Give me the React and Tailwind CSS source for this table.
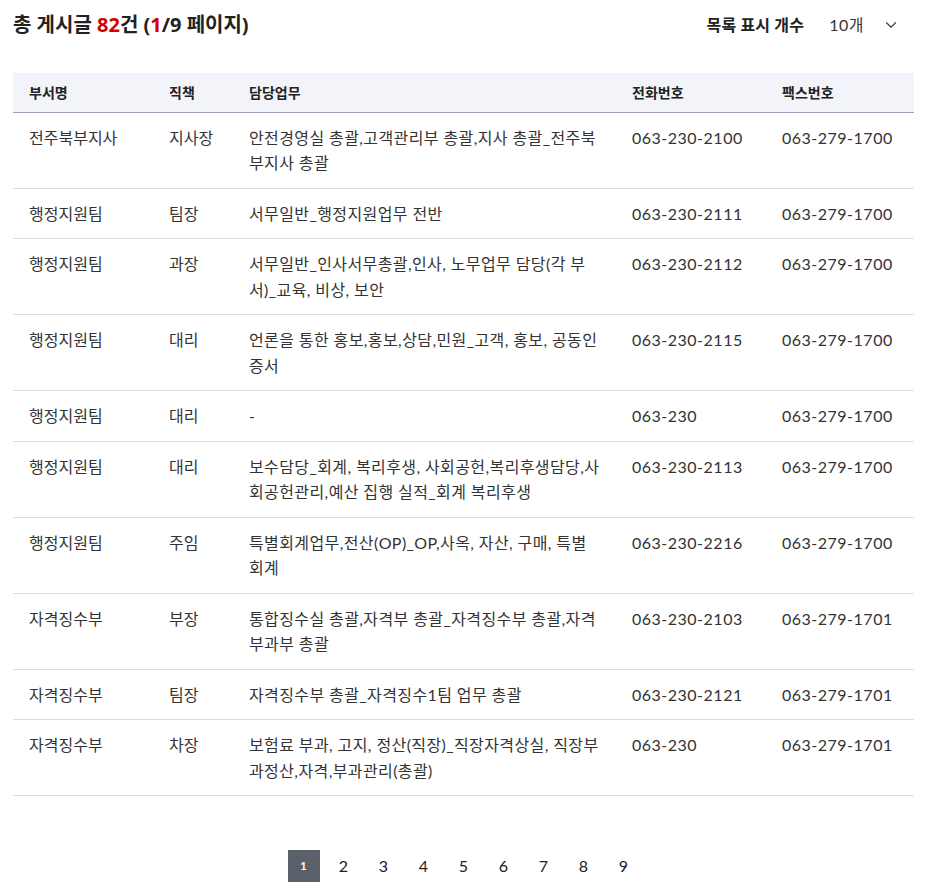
import React from "react";
import { ChevronDown } from "lucide-react";

const rows = [
  ["전주북부지사", "지사장", "안전경영실 총괄,고객관리부 총괄,지사 총괄_전주북부지사 총괄", "063-230-2100", "063-279-1700"],
  ["행정지원팀", "팀장", "서무일반_행정지원업무 전반", "063-230-2111", "063-279-1700"],
  ["행정지원팀", "과장", "서무일반_인사서무총괄,인사, 노무업무 담당(각 부서)_교육, 비상, 보안", "063-230-2112", "063-279-1700"],
  ["행정지원팀", "대리", "언론을 통한 홍보,홍보,상담,민원_고객, 홍보, 공동인증서", "063-230-2115", "063-279-1700"],
  ["행정지원팀", "대리", "-", "063-230", "063-279-1700"],
  ["행정지원팀", "대리", "보수담당_회계, 복리후생, 사회공헌,복리후생담당,사회공헌관리,예산 집행 실적_회계 복리후생", "063-230-2113", "063-279-1700"],
  ["행정지원팀", "주임", "특별회계업무,전산(OP)_OP,사옥, 자산, 구매, 특별회계", "063-230-2216", "063-279-1700"],
  ["자격징수부", "부장", "통합징수실 총괄,자격부 총괄_자격징수부 총괄,자격부과부 총괄", "063-230-2103", "063-279-1701"],
  ["자격징수부", "팀장", "자격징수부 총괄_자격징수1팀 업무 총괄", "063-230-2121", "063-279-1701"],
  ["자격징수부", "차장", "보험료 부과, 고지, 정산(직장)_직장자격상실, 직장부과정산,자격,부과관리(총괄)", "063-230", "063-279-1701"],
];

const font = { fontFamily: 'Lato, "Noto Sans CJK KR", sans-serif' };
const titleFont = { fontFamily: '"Noto Sans", "Noto Sans CJK KR", sans-serif' };

export default function App() {
  return (
    <div className="min-h-screen bg-white px-[13px] text-[#333]" style={font}>
      {/* top bar */}
      <div className="flex items-center justify-between h-[49px]">
        <h2 className="text-[20px] font-bold text-[#222] leading-none" style={titleFont}>
          총 게시글 <span className="text-[#d40000]">82</span>건 (<span className="text-[#d40000]">1</span>/9 페이지)
        </h2>
        <div className="flex items-center pr-[14px]">
          <span className="text-[16px] font-bold text-[#222] tracking-[0.2px]">목록 표시 개수</span>
          <span className="ml-[25px] text-[16px] text-[#333] tracking-[0.5px]">10개</span>
          <ChevronDown className="ml-[18px] w-[18px] h-[18px] text-[#444]" strokeWidth={1.6} />
        </div>
      </div>

      <table className="w-full mt-[24px] border-collapse table-fixed text-[16px]">
        <colgroup>
          <col className="w-[140px]" />
          <col className="w-[80px]" />
          <col className="w-[383px]" />
          <col className="w-[150px]" />
          <col />
        </colgroup>
        <thead>
          <tr className="bg-[#f3f4f9] border-b border-[#9ea4bd]">
            {["부서명", "직책", "담당업무", "전화번호", "팩스번호"].map((h) => (
              <th key={h} className="text-left font-bold text-[14px] text-[#222] pl-4 h-[39px]">
                {h}
              </th>
            ))}
          </tr>
        </thead>
        <tbody>
          {rows.map((r, i) => (
            <tr key={i} className="border-b border-[#dddddd] align-top">
              {r.map((c, j) => (
                <td
                  key={j}
                  className={`px-4 py-3 leading-[25.5px] break-all ${j >= 3 ? "tracking-[0.5px]" : j === 2 ? "tracking-[0.4px]" : ""}`}
                >
                  {c}
                </td>
              ))}
            </tr>
          ))}
        </tbody>
      </table>

      <div className="flex justify-center gap-2 mt-[54px]">
        {[1, 2, 3, 4, 5, 6, 7, 8, 9].map((n) =>
          n === 1 ? (
            <span key={n} className="w-8 h-8 flex items-center justify-center bg-[#5b616b] text-white text-[11px] font-bold">
              1
            </span>
          ) : (
            <span key={n} className="w-8 h-8 flex items-center justify-center text-[16px] text-[#222]">
              {n}
            </span>
          )
        )}
      </div>
    </div>
  );
}
